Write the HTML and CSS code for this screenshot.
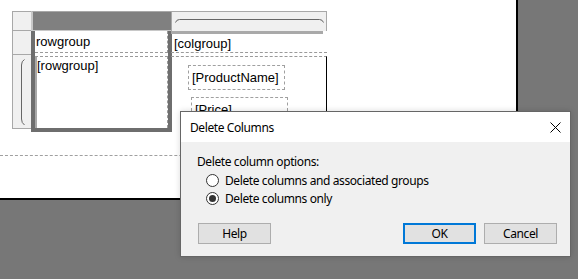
FILE: index.html
```html
<!DOCTYPE html>
<html lang="en">
<head>
    <meta charset="UTF-8">
    <title>Delete Columns</title>
    <link rel="stylesheet" href="styles.css">
</head>
<body>
    <div class="surface">
        <div class="designer">
            <div class="handles">
                <div class="handle corner"></div>
                <div class="handle handle-group"></div>
                <div class="handle handle-detail">
                    <svg width="18" height="74" viewBox="0 0 18 74">
                        <path d="M11.5 4.5 Q8.5 6 8.5 10 V64 Q8.5 68 11.5 70" fill="none" stroke="#666" stroke-width="1"/>
                    </svg>
                </div>
            </div>

            <div class="column column-selected">
                <div class="col-head col-head-dark"></div>
                <div class="sel-body">
                    <div class="cell group-cell">rowgroup</div>
                    <div class="cell detail-cell">[rowgroup]</div>
                </div>
            </div>

            <div class="column column-data">
                <div class="col-head col-head-light">
                    <svg width="153" height="18" viewBox="0 0 153 18">
                        <path d="M3.5 10.5 Q4.5 7.5 7.5 7.5 H147.5 Q150.5 7.5 151.5 10.5" fill="none" stroke="#666" stroke-width="1"/>
                    </svg>
                </div>
                <div class="group-strip"></div>
                <div class="cell group-cell data">[colgroup]</div>
                <div class="cell detail-cell data">
                    <div class="textbox">[ProductName]</div>
                    <div class="textbox second">[Price]</div>
                </div>
            </div>
        </div>
        <div class="page-break"></div>
    </div>

    <div class="dialog">
        <div class="dialog-title">
            <span>Delete Columns</span>
            <svg class="close" width="11" height="11" viewBox="0 0 11 11">
                <path d="M0.5 0.5 L10.5 10.5 M10.5 0.5 L0.5 10.5" stroke="#000" stroke-width="1"/>
            </svg>
        </div>
        <div class="dialog-body">
            <div class="options-label">Delete column options:</div>
            <div class="radio-list">
                <label class="radio">
                    <span class="radio-dot"></span>
                    Delete columns and associated groups
                </label>
                <label class="radio checked">
                    <span class="radio-dot"></span>
                    Delete columns only
                </label>
            </div>
            <div class="button-row">
                <button class="btn">Help</button>
                <div class="spacer"></div>
                <button class="btn btn-default">OK</button>
                <button class="btn">Cancel</button>
            </div>
        </div>
    </div>
</body>
</html>
```

FILE: styles.css
```css
* {
    margin: 0;
    padding: 0;
    box-sizing: border-box;
}

body {
    background: #777;
    font-family: 'Liberation Sans', Arial, sans-serif;
    color: #000;
    width: 578px;
    height: 279px;
    overflow: hidden;
}

.surface {
    width: 518px;
    height: 200px;
    background: #fff;
    border-right: 2px solid #000;
    border-bottom: 2px solid #000;
    overflow: hidden;
}

.designer {
    display: flex;
    align-items: flex-start;
    margin: 11px 0 0 12px;
    height: 121px;
    font-size: 13px;
}

/* row handles on the left */
.handles {
    width: 20px;
    display: flex;
    flex-direction: column;
}

.handle {
    background: #f0f0f0;
    border: 1px solid #a8a8a8;
    border-top: none;
}

.corner {
    height: 20px;
    border-top: 1px solid #a8a8a8;
}

.handle-group {
    height: 24px;
}

.handle-detail {
    height: 74px;
}

.handle-detail svg {
    display: block;
}

/* columns */
.column {
    display: flex;
    flex-direction: column;
}

.column-selected {
    width: 141px;
    margin-left: -1px;
}

.col-head {
    height: 20px;
}

.col-head-dark {
    background: #808080;
    border-top: 1px solid #a8a8a8;
    border-left: 2px solid #c8c8c8;
    border-right: 1px solid #c8c8c8;
    border-bottom: 1px solid #c8c8c8;
}

.sel-body {
    height: 101px;
    border: 4px solid #6e6e6e;
    border-top: none;
    display: flex;
    flex-direction: column;
}

.cell {
    white-space: nowrap;
}

.group-cell {
    height: 22px;
    line-height: 22px;
    padding-left: 1px;
    border-bottom: 1px dashed #9a9a9a;
    border-right: 1px dashed #9a9a9a;
}

.detail-cell {
    flex: 1;
    margin-top: 3px;
    border-top: 1px dashed #9a9a9a;
    border-right: 1px dashed #9a9a9a;
    border-left: 2px solid #a8a8a8;
    line-height: 18px;
}

.column-data {
    width: 156px;
    margin-left: -1px;
}

.col-head-light {
    background: #f0f0f0;
    border: 1px solid #a8a8a8;
    border-bottom: none;
}

.col-head-light svg {
    display: block;
}

.group-strip {
    height: 3px;
    background: #a9a9a9;
    margin-right: 4px;
}

.group-cell.data {
    height: 19px;
    line-height: 19px;
    padding-left: 3px;
    border-right: none;
}

.detail-cell.data {
    height: 72px;
    flex: none;
    border-left: none;
    border-right: 1px solid #000;
    padding-top: 8px;
}

.textbox {
    width: 97px;
    height: 25px;
    margin-left: 17px;
    padding-left: 3px;
    line-height: 23px;
    border: 1px dashed #a0a0a0;
}

.textbox.second {
    margin-left: 20px;
    margin-top: 7px;
}

.page-break {
    margin-top: 23px;
    border-top: 1px dashed #a0a0a0;
}

/* dialog */
.dialog {
    position: absolute;
    left: 180px;
    top: 111px;
    width: 391px;
    height: 146px;
    border: 1px solid #666;
    background: #f0f0f0;
    font-family: 'Noto Sans', 'Open Sans', sans-serif;
    font-size: 12px;
    letter-spacing: -0.4px;
    box-shadow: 0 0 6px rgba(0,0,0,0.15);
}

.dialog-title {
    height: 30px;
    background: #fff;
    display: flex;
    justify-content: space-between;
    align-items: center;
    padding: 0 9px 0 9px;
}

.close {
    display: block;
}

.dialog-body {
    padding: 12px 13px 0 16px;
}

.options-label {
    line-height: 16px;
}

.radio-list {
    margin-top: 1px;
}

.radio {
    display: flex;
    align-items: center;
    height: 18px;
    padding-left: 9px;
}

.radio-dot {
    width: 13px;
    height: 13px;
    border: 1px solid #333;
    border-radius: 50%;
    background: #fff;
    margin-right: 6px;
    display: flex;
    align-items: center;
    justify-content: center;
}

.radio.checked .radio-dot::after {
    content: "";
    width: 7px;
    height: 7px;
    border-radius: 50%;
    background: #333;
}

.button-row {
    display: flex;
    gap: 8px;
    margin-top: 16px;
    padding-left: 1px;
}

.spacer {
    flex: 1;
}

.btn {
    width: 73px;
    height: 21px;
    background: #e1e1e1;
    border: 1px solid #adadad;
    font-family: inherit;
    font-size: 12px;
    letter-spacing: -0.4px;
    color: #000;
}

.btn-default {
    border: 2px solid #0078d7;
}
```
